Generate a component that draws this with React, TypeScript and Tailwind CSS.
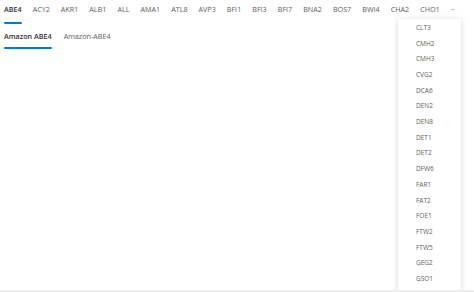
import React from 'react';

const tabs = ['ABE4', 'ACY2', 'AKR1', 'ALB1', 'ALL', 'AMA1', 'ATL8', 'AVP3', 'BFI1', 'BFI3', 'BFI7', 'BNA2', 'BOS7', 'BWI4', 'CHA2', 'CHO1'];

const overflow = ['CLT3', 'CMH2', 'CMH3', 'CVG2', 'DCA6', 'DEN2', 'DEN8', 'DET1', 'DET2', 'DFW6', 'FAR1', 'FAT2', 'FOE1', 'FTW2', 'FTW5', 'GEG2', 'GSO1'];

export default function App() {
  return (
    <div className="relative w-[474px] h-[292px] bg-white overflow-hidden font-['Open_Sans',sans-serif]">
      {/* top pivot */}
      <div className="flex items-start gap-[11px] pl-[4px] pt-[4px] text-[7.2px] leading-[10px]">
        {tabs.map((t, i) => (
          <div key={t} className="flex flex-col">
            <span className={i === 0 ? 'font-semibold text-[#323130]' : 'text-[#605e5c]'}>{t}</span>
            {i === 0 && <div className="mt-[8px] h-[2px] rounded-full bg-[#0078d4]" />}
          </div>
        ))}
        <span className="text-[#605e5c] tracking-[-0.5px]">···</span>
      </div>

      {/* sub pivot */}
      <div className="flex items-start gap-[12px] pl-[4px] mt-[7px] text-[7.2px] leading-[10px]">
        <div className="flex flex-col">
          <span className="font-semibold text-[#323130]">Amazon ABE4</span>
          <div className="mt-[6px] h-[2px] rounded-full bg-[#0078d4]" />
        </div>
        <span className="text-[#605e5c]">Amazon-ABE4</span>
      </div>

      {/* overflow menu */}
      <div className="absolute left-[398px] top-[19px] w-[63px] h-[272px] bg-white shadow-[0_1px_6px_rgba(0,0,0,0.16)] pt-[1px]">
        {overflow.map((o) => (
          <div key={o} className="h-[15.7px] pl-[18px] flex items-center text-[6.5px] text-[#605e5c]">
            {o}
          </div>
        ))}
      </div>

      {/* bottom border */}
      <div className="absolute left-0 right-0 bottom-0 h-[2px] bg-[#ededed]" />
    </div>
  );
}
